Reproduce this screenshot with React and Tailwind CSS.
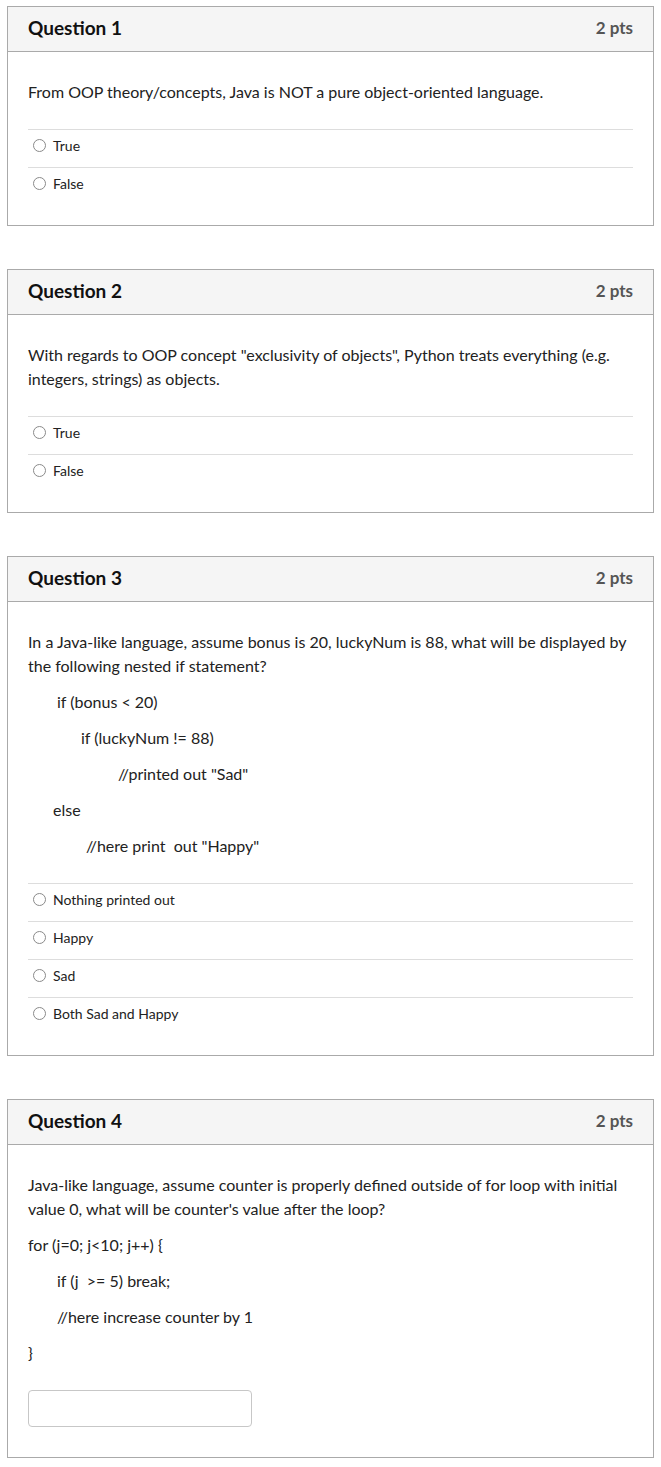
import React from 'react';

const questions = [
  {
    id: 1,
    text: ['From OOP theory/concepts, Java is NOT a pure object-oriented language.'],
    answers: ['True', 'False'],
  },
  {
    id: 2,
    text: ['With regards to OOP concept "exclusivity of objects", Python treats everything (e.g. integers, strings) as objects.'],
    answers: ['True', 'False'],
  },
  {
    id: 3,
    text: ['In a Java-like language, assume bonus is 20, luckyNum is 88, what will be displayed by the following nested if statement?'],
    code: [
      { line: 'if (bonus < 20)', pad: 'pl-[29px]' },
      { line: 'if (luckyNum != 88)', pad: 'pl-[53px]' },
      { line: '//printed out "Sad"', pad: 'pl-[90px]' },
      { line: 'else', pad: 'pl-[25px]' },
      { line: '//here print\u00a0 out "Happy"', pad: 'pl-[58px]' },
    ],
    answers: ['Nothing printed out', 'Happy', 'Sad', 'Both Sad and Happy'],
  },
  {
    id: 4,
    text: ["Java-like language, assume counter is properly defined outside of for loop with initial value 0, what will be counter's value after the loop?"],
    code: [
      { line: 'for (j=0; j<10; j++) {', pad: 'pl-0' },
      { line: 'if (j\u00a0 >= 5) break;', pad: 'pl-[29px]' },
      { line: '//here increase counter by 1', pad: 'pl-[29px]' },
      { line: '}', pad: 'pl-0' },
    ],
    input: true,
  },
];

const Radio = () => (
  <span className="w-[13px] h-[13px] rounded-full border border-[#8a8a8a] bg-white shrink-0" />
);

const Question = ({ q }) => (
  <div className="border border-[#aaaaaa] bg-white mb-[43px]">
    {/* Header */}
    <div className="h-[45px] flex items-center justify-between px-5 pb-[2px] bg-[#f5f5f5] border-b border-[#aaaaaa]">
      <h2 className="text-[19px] font-bold text-[#111]">Question {q.id}</h2>
      <span className="text-[17px] font-bold text-[#555]">2 pts</span>
    </div>

    {/* Body */}
    <div className={`px-5 pt-[28px] ${q.input ? 'pb-[30px]' : 'pb-[20px]'}`}>
      <div className="text-[16px] leading-[24px] text-[#222] mb-[25px] space-y-[12px]">
        {q.text.map((t, i) => (
          <p key={i}>{t}</p>
        ))}
        {q.code &&
          q.code.map((c, i) => (
            <p key={i} className={`${c.pad} whitespace-pre`}>{c.line}</p>
          ))}
      </div>

      {q.answers && (
        <div>
          {q.answers.map((a) => (
            <label key={a} className="h-[38px] flex items-center gap-[7px] pl-[5px] pb-[6px] border-t border-[#dddddd] text-[14px] text-[#222]">
              <Radio />
              <span>{a}</span>
            </label>
          ))}
        </div>
      )}

      {q.input && (
        <div className="w-[224px] h-[37px] border border-[#c7c7c7] rounded-[4px] bg-white" />
      )}
    </div>
  </div>
);

export default function App() {
  return (
    <div className="min-h-screen bg-white px-[7px] pt-[6px] font-['Lato',sans-serif]">
      {questions.map((q) => (
        <Question key={q.id} q={q} />
      ))}
    </div>
  );
}
